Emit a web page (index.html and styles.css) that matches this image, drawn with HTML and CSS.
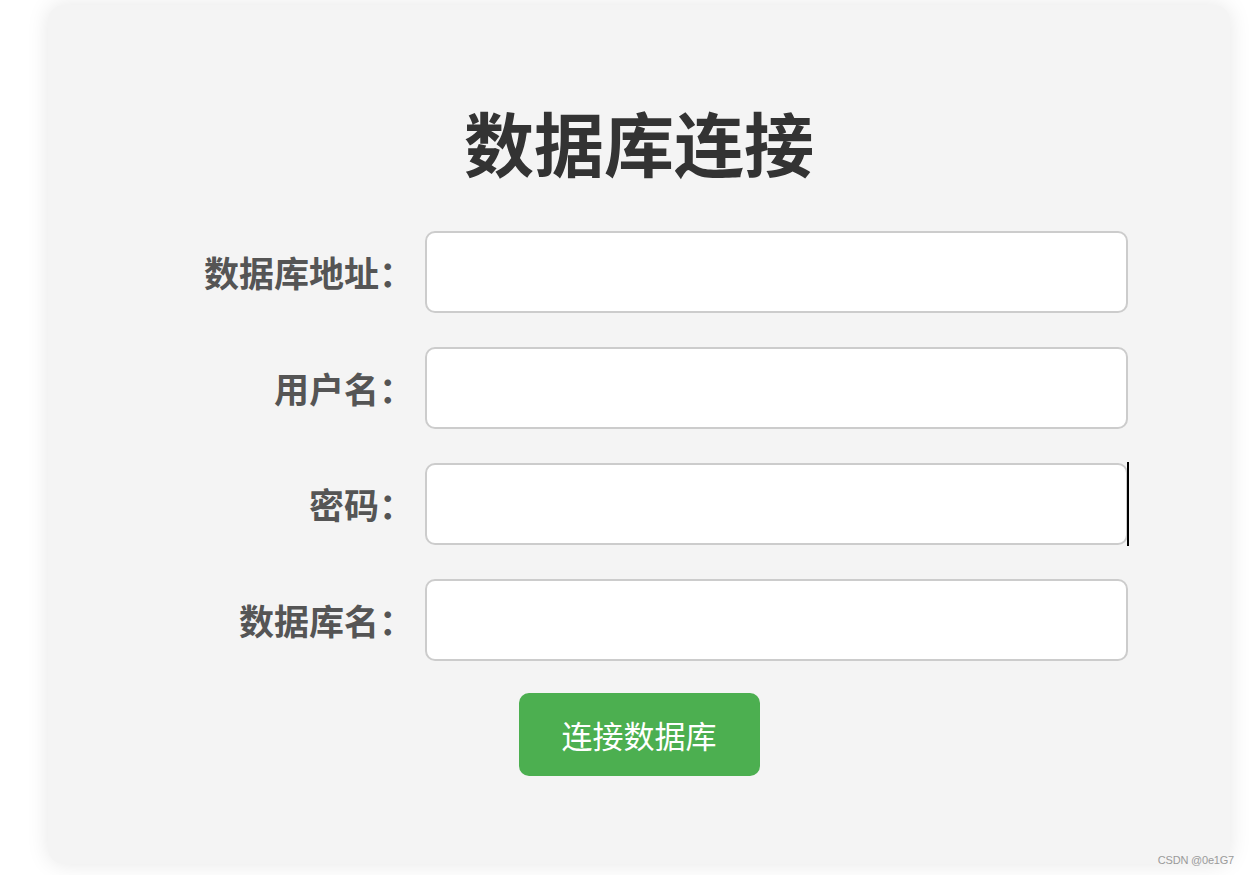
FILE: index.html
```html
<!DOCTYPE html>
<html lang="zh-CN">
<head>
<meta charset="utf-8">
<title>数据库连接</title>
<link rel="stylesheet" href="styles.css">
</head>
<body>
<div class="card">
  <h1 class="title">数据库连接</h1>
  <form class="form">
    <label class="label" for="host">数据库地址：</label>
    <input class="input" id="host" type="text">
    <label class="label" for="user">用户名：</label>
    <input class="input" id="user" type="text">
    <label class="label" for="pass">密码：</label>
    <div class="input-wrap">
      <input class="input" id="pass" type="password">
      <span class="caret"></span>
    </div>
    <label class="label" for="db">数据库名：</label>
    <input class="input" id="db" type="text">
  </form>
  <div class="actions">
    <button class="btn" type="button">连接数据库</button>
  </div>
</div>
<div class="watermark">CSDN @0e1G7</div>
</body>
</html>
```
FILE: styles.css
```css
html, body {
  margin: 0;
  padding: 0;
  background: #ffffff;
}
body {
  width: 1249px;
  height: 875px;
  position: relative;
  overflow: hidden;
  font-family: "Noto Sans CJK SC", "Noto Sans", sans-serif;
}
.card {
  box-sizing: border-box;
  width: 1182px;
  height: 859px;
  margin: 5px 0 0 48px;
  padding-top: 97px;
  background: #f4f4f4;
  border-radius: 16px;
  box-shadow: 0 0 22px rgba(0, 0, 0, 0.1);
}
.title {
  margin: 0 0 49px;
  text-align: center;
  font-size: 70px;
  line-height: 80px;
  font-weight: 700;
  color: #333333;
}
.form {
  display: grid;
  grid-template-columns: 245px 703px;
  column-gap: 30px;
  row-gap: 34px;
  justify-content: center;
  align-items: center;
}
.label {
  text-align: right;
  font-size: 35px;
  font-weight: 700;
  color: #555555;
  line-height: 40px;
  margin-right: -19px;
}
.input {
  box-sizing: border-box;
  display: block;
  width: 703px;
  height: 82px;
  border: 2px solid #cccccc;
  border-radius: 10px;
  background: #ffffff;
  outline: none;
  padding: 0 16px;
  font-size: 24px;
}
.input-wrap {
  position: relative;
}
.caret {
  position: absolute;
  right: -1px;
  top: -1px;
  width: 2px;
  height: 84px;
  background: #000000;
}
.actions {
  display: flex;
  justify-content: center;
  margin-top: 32px;
}
.btn {
  width: 241px;
  height: 83px;
  border: none;
  border-radius: 10px;
  background: #4caf50;
  color: #ffffff;
  font-family: "Noto Sans CJK SC", "Noto Sans", sans-serif;
  font-size: 31px;
  font-weight: 400;
  padding: 0;
  cursor: pointer;
}
.watermark {
  position: absolute;
  right: 15px;
  top: 854px;
  font-family: "Liberation Sans", Arial, sans-serif;
  font-size: 11px;
  color: #9a9a9a;
  letter-spacing: -0.2px;
}
```
